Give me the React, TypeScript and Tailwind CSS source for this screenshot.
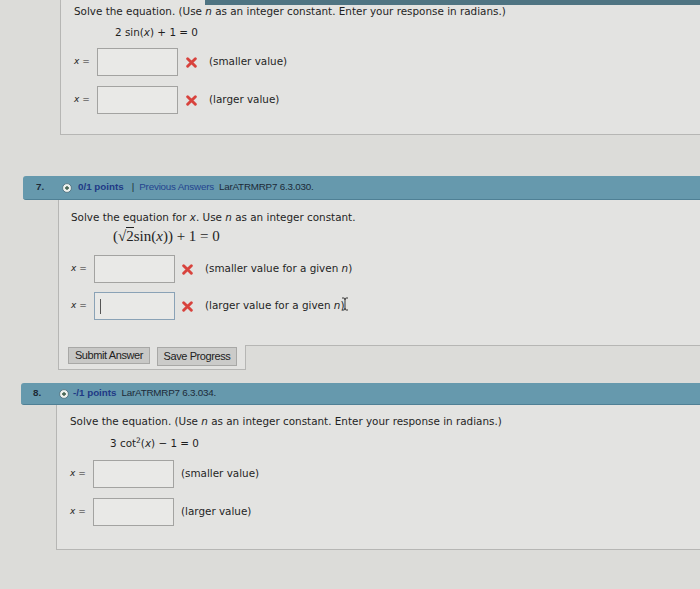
import React from "react";

const body = { fontFamily: '"DejaVu Sans", Verdana, sans-serif' };
const arial = { fontFamily: '"Liberation Sans", Arial, sans-serif' };
const serif = { fontFamily: '"Liberation Serif", "Times New Roman", serif' };

function RedX() {
  return (
    <svg width="11" height="11" viewBox="0 0 10 10" className="shrink-0">
      <path d="M1.5 1.5 L8.5 8.5 M8.5 1.5 L1.5 8.5" stroke="#d8433d" strokeWidth="2.6" strokeLinecap="round" />
    </svg>
  );
}

function Dot() {
  return (
    <svg width="10" height="10" viewBox="0 0 10 10" className="shrink-0">
      <circle cx="5" cy="5" r="4.4" fill="#eef1ee" stroke="#496b78" strokeWidth="0.8" />
      <path d="M5 3 V7 M3 5 H7" stroke="#3a5a48" strokeWidth="1.3" />
    </svg>
  );
}

function Box({ focused }: { focused?: boolean }) {
  return (
    <div
      className={
        "w-[81px] h-[28px] shrink-0 bg-[#e9e9e7] border flex items-center " +
        (focused ? "border-[#8aa2b6]" : "border-[#a3a3a1]")
      }
    >
      {focused && <div className="ml-[5px] w-px h-[15px] bg-[#555]" />}
    </div>
  );
}

function Row({
  labelW,
  note,
  wrong,
  xGap,
  noteGap,
  focused,
  cursor,
}: {
  labelW: string;
  note: React.ReactNode;
  wrong?: boolean;
  xGap?: string;
  noteGap: string;
  focused?: boolean;
  cursor?: boolean;
}) {
  return (
    <div className="flex items-center text-[10.4px] text-[#1f1f1f]">
      <span className={labelW + " shrink-0 text-[9px]"}>
        <i>x</i> =
      </span>
      <Box focused={focused} />
      {wrong && (
        <span className={xGap}>
          <RedX />
        </span>
      )}
      <span className={noteGap + " relative"}>
        {note}
        {cursor && (
          <svg width="8" height="14" viewBox="0 0 8 14" className="absolute right-[-5px] top-[-1px]">
            <path d="M1 1 H3 Q4 1 4 3 V11 Q4 13 3 13 H1 M7 1 H5 Q4 1 4 3 M4 11 Q4 13 5 13 H7" stroke="#222" strokeWidth="0.9" fill="none" />
          </svg>
        )}
      </span>
    </div>
  );
}

function Header({
  num,
  points,
  prev,
  code,
  ml,
  pl,
  numW,
  dotGap,
  h,
}: {
  num: string;
  points: string;
  prev?: boolean;
  code: string;
  ml: string;
  pl: string;
  numW: string;
  dotGap: string;
  h: string;
}) {
  return (
    <div
      className={
        ml + " " + pl + " " + h +
        " flex items-center bg-[#6699ad] border-b border-[#4f8095] rounded-l-[3px] text-[9.8px]"
      }
      style={arial}
    >
      <span className={numW + " font-bold text-[#1d2a36]"}>{num}</span>
      <Dot />
      <span className={dotGap + " font-bold text-[#1f3a86]"}>{points}</span>
      {prev && (
        <>
          <span className="ml-[8px] text-[#1d2a36]">|</span>
          <span className="ml-[5px] text-[#24448f] tracking-[-0.2px]">Previous Answers</span>
        </>
      )}
      <span className="ml-[5px] text-[#1c2a38] tracking-[-0.2px]">{code}</span>
    </div>
  );
}

export default function App() {
  return (
    <div className="w-[700px] h-[589px] overflow-hidden bg-[#dcdcd9]" style={body}>
      {/* strip of previous header */}
      <div className="flex h-[5px]">
        <div className="w-[60px] shrink-0" />
        <div className="w-[145px] border-l border-[#b8b8b6] bg-[#e3e3e1]" />
        <div className="flex-1 bg-[#4f7482]" />
      </div>

      {/* previous question body */}
      <div className="ml-[60px] h-[131px] border-l border-b border-[#b6b6b4] bg-[#e3e3e1] pl-[13px]">
        <div className="text-[10.4px] leading-[14px] text-[#1f1f1f] -mt-[1px]">
          Solve the equation. (Use <i>n</i> as an integer constant. Enter your response in radians.)
        </div>
        <div className="ml-[41px] mt-[7px] text-[10.4px] leading-[14px] text-[#1f1f1f]">
          2 sin(<i>x</i>) + 1 = 0
        </div>
        <div className="mt-[9px]">
          <Row labelW="w-[23px]" wrong xGap="ml-[8px]" noteGap="ml-[12px]" note="(smaller value)" />
        </div>
        <div className="mt-[10px]">
          <Row labelW="w-[23px]" wrong xGap="ml-[8px]" noteGap="ml-[12px]" note="(larger value)" />
        </div>
      </div>

      {/* question 7 */}
      <div className="mt-[41px]">
        <Header
          num="7."
          points="0/1 points"
          prev
          code="LarATRMRP7 6.3.030."
          ml="ml-[23px]"
          pl="pl-[13px]"
          numW="w-[26px]"
          dotGap="ml-[6px]"
          h="h-[24px]"
        />
        <div className="ml-[58px] border-l border-[#b6b6b4] bg-[#e3e3e1]">
          <div className="pl-[12px]">
            <div className="pt-[10px] text-[10.4px] leading-[14px] text-[#1f1f1f]">
              Solve the equation for <i>x</i>. Use <i>n</i> as an integer constant.
            </div>
            <div className="ml-[42px] mt-[4px] text-[15px] leading-[17px] text-[#1f1f1f]" style={serif}>
              (<span>√</span>
              <span className="border-t border-[#222]">2</span>sin(<i>x</i>)) + 1 = 0
            </div>
            <div className="mt-[10px]">
              <Row
                labelW="w-[23px]"
                wrong
                xGap="ml-[7px]"
                noteGap="ml-[12px]"
                note={
                  <>
                    (smaller value for a given <i>n</i>)
                  </>
                }
              />
            </div>
            <div className="mt-[9px]">
              <Row
                labelW="w-[23px]"
                wrong
                xGap="ml-[7px]"
                noteGap="ml-[12px]"
                focused
                cursor
                note={
                  <>
                    (larger value for a given <i>n</i>)
                  </>
                }
              />
            </div>
          </div>
          <div className="flex mt-[25px]">
            <div className="w-[187px] h-[25px] border-r border-b border-[#b6b6b4] pl-[9px] pt-[2px] flex items-start gap-[7px]" style={arial}>
              <div className="w-[82px] h-[17px] bg-[#c8c8c6] border border-[#a8a8a6] text-[11px] text-[#222] flex items-center justify-center tracking-[-0.4px]">
                Submit Answer
              </div>
              <div className="w-[80px] h-[19px] bg-[#cbcbc9] border border-[#a8a8a6] text-[11px] text-[#222] flex items-center justify-center tracking-[-0.4px]">
                Save Progress
              </div>
            </div>
            <div className="flex-1 border-t border-[#b6b6b4] bg-[#dcdcd9]" />
          </div>
        </div>
      </div>

      {/* question 8 */}
      <div className="mt-[13px]">
        <Header
          num="8."
          points="-/1 points"
          code="LarATRMRP7 6.3.034."
          ml="ml-[21px]"
          pl="pl-[12px]"
          numW="w-[26px]"
          dotGap="ml-[4px]"
          h="h-[22px]"
        />
        <div className="ml-[56px] h-[145px] border-l border-b border-[#b6b6b4] bg-[#e3e3e1] pl-[13px]">
          <div className="pt-[9px] text-[10.4px] leading-[14px] text-[#1f1f1f]">
            Solve the equation. (Use <i>n</i> as an integer constant. Enter your response in radians.)
          </div>
          <div className="ml-[40px] mt-[8px] text-[10.4px] leading-[14px] text-[#1f1f1f]">
            3 cot<sup className="text-[7.5px]">2</sup>(<i>x</i>) − 1 = 0
          </div>
          <div className="mt-[10px]">
            <Row labelW="w-[23px]" noteGap="ml-[7px]" note="(smaller value)" />
          </div>
          <div className="mt-[10px]">
            <Row labelW="w-[23px]" noteGap="ml-[7px]" note="(larger value)" />
          </div>
        </div>
      </div>
    </div>
  );
}
